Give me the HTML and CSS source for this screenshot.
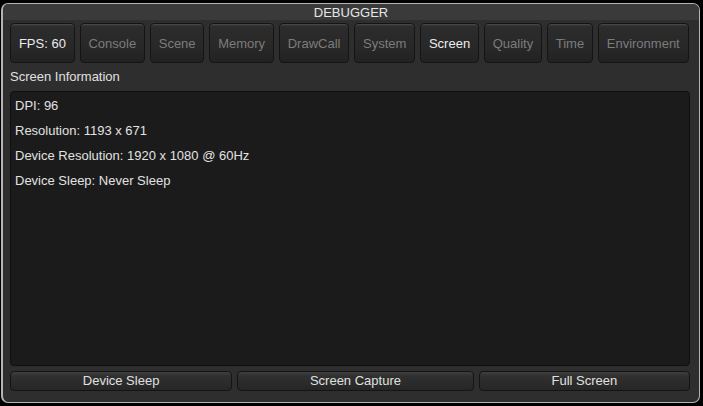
FILE: index.html
```html
<!DOCTYPE html>
<html>
<head>
<meta charset="utf-8">
<link rel="stylesheet" href="styles.css">
</head>
<body>
<div class="window">
  <div class="titlebar">DEBUGGER</div>
  <div class="main">
    <div class="tabs">
      <div class="tab active">FPS: 60</div>
      <div class="tab">Console</div>
      <div class="tab">Scene</div>
      <div class="tab">Memory</div>
      <div class="tab">DrawCall</div>
      <div class="tab">System</div>
      <div class="tab active">Screen</div>
      <div class="tab">Quality</div>
      <div class="tab">Time</div>
      <div class="tab">Environment</div>
    </div>
    <div class="section-label">Screen Information</div>
    <div class="info">
      <div class="line">DPI: 96</div>
      <div class="line">Resolution: 1193 x 671</div>
      <div class="line">Device Resolution: 1920 x 1080 @ 60Hz</div>
      <div class="line">Device Sleep: Never Sleep</div>
    </div>
    <div class="actions">
      <div class="btn">Device Sleep</div>
      <div class="btn">Screen Capture</div>
      <div class="btn">Full Screen</div>
    </div>
  </div>
</div>
</body>
</html>
```
FILE: styles.css
```css
html, body {
  margin: 0;
  padding: 0;
  background: #000;
}
body {
  font-family: "Liberation Sans", Arial, sans-serif;
  font-size: 13px;
  color: #d8d8d8;
  padding: 3px 0 0 1px;
  width: 703px;
  height: 406px;
  box-sizing: border-box;
}
.window {
  width: 699px;
  height: 400px;
  box-sizing: border-box;
  border: 1px solid #b4b4b4;
  border-left-width: 2px;
  border-radius: 7px;
  background: #2e2e2e;
  display: flex;
  flex-direction: column;
  overflow: hidden;
}
.titlebar {
  height: 16px;
  line-height: 17px;
  background: #3a3a3a;
  text-align: center;
  color: #e6e6e6;
  font-size: 13px;
  flex: none;
}
.main {
  flex: 1;
  display: flex;
  flex-direction: column;
  padding: 3px 9px 11px 7px;
  min-height: 0;
}
.tabs {
  display: flex;
  gap: 4.8px;
  height: 40px;
  flex: none;
}
.tab {
  box-sizing: border-box;
  height: 40px;
  padding: 0 7.9px;
  display: flex;
  align-items: center;
  border: 1px solid #141414;
  border-radius: 4px;
  background: linear-gradient(#3c3c3c 0px, #2c2c2c 3px, #282828 60%, #222 100%);
  box-shadow: inset 0 1px 0 #474747;
  color: #7c7c7c;
  white-space: nowrap;
}
.tab.active {
  color: #ececec;
}
.section-label {
  flex: none;
  height: 28px;
  line-height: 28px;
  color: #e0e0e0;
  padding-left: 0;
}
.info {
  flex: 1;
  background: #1b1b1b;
  border: 1px solid #0f0f0f;
  border-radius: 4px;
  padding: 1px 4px 2px;
  min-height: 0;
}
.line {
  height: 25px;
  line-height: 25px;
  color: #e2e2e2;
}
.actions {
  flex: none;
  display: flex;
  gap: 5px;
  margin-top: 5px;
  height: 20px;
}
.btn {
  flex: 1 1 auto;
  box-sizing: border-box;
  height: 20px;
  line-height: 18px;
  text-align: center;
  border: 1px solid #141414;
  border-radius: 4px;
  background: linear-gradient(#404040 0px, #303030 4px, #262626 100%);
  color: #e0e0e0;
  padding: 0 8px;
  white-space: nowrap;
}
```
